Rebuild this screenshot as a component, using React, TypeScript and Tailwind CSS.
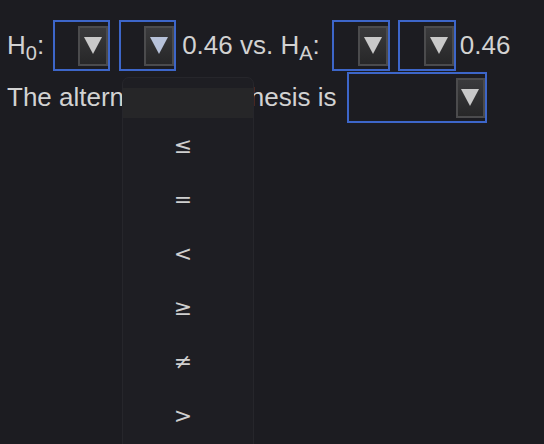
import React from 'react';

const Arrow = ({ tint = '#c9c9c9' }: { tint?: string }) => (
    <svg width="18" height="17" viewBox="0 0 18 17">
        <polygon points="0,0 18,0 9,17" fill={tint} />
    </svg>
);

const FakeSelect = ({ width = 57, tint, wide = false }: { width?: number; tint?: string; wide?: boolean }) => (
    <div
        className="h-[51px] border-2 border-[#3d66c9] flex items-center justify-end shrink-0"
        style={{ width }}
    >
        <div
            className={`${wide ? 'w-[29px]' : 'w-[30px]'} h-[40px] border-2 border-[#4b4b4d] bg-gradient-to-b from-[#3a3a3c] to-[#272728] flex items-center justify-center`}
        >
            <Arrow tint={tint} />
        </div>
    </div>
);

const options = ['≤', '=', '<', '≥', '≠', '>'];

export default function App() {
    return (
        <div className="relative w-[544px] h-[444px] overflow-hidden bg-[#1c1c21] text-[#d2d2d2] font-['Liberation_Sans',Arial,sans-serif] text-[26px]">
            <div className="pt-[20px] pl-[7px]">
                {/* first line */}
                <div className="flex items-center h-[51px]">
                    <span className="mr-[9px] whitespace-nowrap">
                        H<sub className="text-[20px] relative top-[6px]">0</sub>:
                    </span>
                    <FakeSelect />
                    <div className="w-[9px] shrink-0" />
                    <FakeSelect tint="#b7c2da" />
                    <span className="ml-[6px] mr-[12px] whitespace-nowrap">
                        0.46 vs. H<sub className="text-[20px] relative top-[6px]">A</sub>:
                    </span>
                    <FakeSelect width={58} />
                    <div className="w-[8px] shrink-0" />
                    <FakeSelect width={58} />
                    <span className="ml-[4px]">0.46</span>
                </div>

                {/* second line */}
                <div className="flex items-center h-[51px] mt-[1px]">
                    <span className="mr-[10px] whitespace-nowrap">The alternative hypothesis is</span>
                    <FakeSelect width={140} wide />
                </div>
            </div>

            {/* open dropdown */}
            <div className="absolute left-[122px] top-[77px] w-[132px] h-[400px] rounded-[7px] bg-[#1e1e23] border border-[#26262b] pt-[10px] font-['DejaVu_Sans',sans-serif] text-[22px] text-[#cfcfcf]">
                <div className="h-[30px] bg-[#262628]" />
                {options.map((o) => (
                    <div key={o} className="h-[54px] flex items-center justify-center pr-[10px]">
                        {o}
                    </div>
                ))}
            </div>
        </div>
    );
}
